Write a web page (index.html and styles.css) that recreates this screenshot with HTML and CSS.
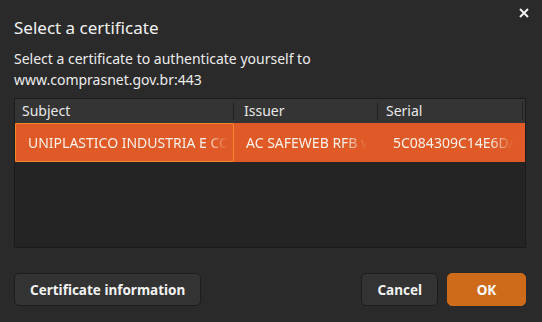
FILE: index.html
```html
<!DOCTYPE html>
<html lang="en">
  <head>
    <meta charset="UTF-8" />
    <title>Select a certificate</title>
    <link rel="stylesheet" href="styles.css">
  </head>
  <body>
    <div class="dialog">
      <button class="close" aria-label="Close">
        <svg width="10" height="10" viewBox="0 0 10 10">
          <path d="M1 1 L9 9 M9 1 L1 9" stroke="#f2f2f2" stroke-width="2" />
        </svg>
      </button>
      <h1 class="title">Select a certificate</h1>
      <p class="message">
        Select a certificate to authenticate yourself to<br />
        www.comprasnet.gov.br:443
      </p>

      <div class="cert-table">
        <div class="row head">
          <div class="cell">Subject</div>
          <div class="cell">Issuer</div>
          <div class="cell">Serial</div>
        </div>
        <div class="row selected">
          <div class="cell focus"><span>UNIPLASTICO INDUSTRIA E COMERCIO LTDA</span></div>
          <div class="cell"><span>AC SAFEWEB RFB v5</span></div>
          <div class="cell"><span>5C084309C14E6DA1</span></div>
        </div>
      </div>

      <div class="actions">
        <button class="btn">Certificate information</button>
        <div class="spacer"></div>
        <button class="btn">Cancel</button>
        <button class="btn primary">OK</button>
      </div>
    </div>
  </body>
</html>
```

FILE: styles.css
```css
* {
  margin: 0;
  padding: 0;
  box-sizing: border-box;
}
body {
  font-family: "Noto Sans", "Open Sans", sans-serif;
  background: #2a2a2a;
  color: #f2f2f2;
  width: 542px;
  height: 322px;
  overflow: hidden;
}
.dialog {
  position: relative;
  padding: 15px 16px 16px 14px;
  display: flex;
  flex-direction: column;
  height: 100%;
}
.close {
  position: absolute;
  top: 8px;
  right: 13px;
  width: 10px;
  height: 10px;
  background: none;
  border: none;
  display: flex;
}
.title {
  font-size: 17px;
  font-weight: 400;
  line-height: 26px;
}
.message {
  margin-top: 7px;
  font-size: 14px;
  line-height: 21px;
  color: #ececec;
}

/* ------------ table ------------ */
.cert-table {
  margin-top: 8px;
  height: 150px;
  border: 1px solid #1c1c1c;
  background: #242424;
}
.row {
  display: grid;
  grid-template-columns: 219px 144px 1fr;
}
.head {
  height: 24px;
  background: #343434;
  font-size: 14px;
  color: #e8e8e8;
}
.head .cell {
  padding-left: 8px;
  border-right: 1px solid #222;
  margin: 3px 0;
  line-height: 18px;
}
.head .cell:first-child { padding-left: 7px; }
.head .cell:nth-child(2) { padding-left: 10px; }
.head .cell:last-child { margin-right: 2px; }
.selected {
  height: 39px;
  background: #e05a27;
  font-size: 14px;
  color: #fbf0ea;
}
.selected .cell {
  display: flex;
  align-items: center;
  padding-left: 12px;
  overflow: hidden;
  white-space: nowrap;
}
.selected .cell span {
  display: block;
  overflow: hidden;
  -webkit-mask-image: linear-gradient(to right, #000 calc(100% - 22px), transparent);
  mask-image: linear-gradient(to right, #000 calc(100% - 22px), transparent);
}
.selected .cell:nth-child(1) span { width: 200px; }
.selected .cell:nth-child(2) span { width: 121px; }
.selected .cell:nth-child(3) { padding-left: 15px; }
.selected .cell:nth-child(3) span { width: 120px; }
.focus {
  border: 1px solid #f28a2a;
  border-radius: 2px;
}

/* ------------ buttons ------------ */
.actions {
  margin-top: auto;
  display: flex;
  gap: 9px;
}
.spacer { flex: 1; }
.btn {
  height: 33px;
  padding: 0 15px;
  font-family: inherit;
  font-size: 13.5px;
  font-weight: 700;
  color: #f2f2f2;
  background: #333;
  border: 1px solid #1d1d1d;
  border-radius: 5px;
}
.btn.primary {
  width: 79px;
  background: #ce6b1b;
  border-color: #ce6b1b;
  color: #fff;
}
```
